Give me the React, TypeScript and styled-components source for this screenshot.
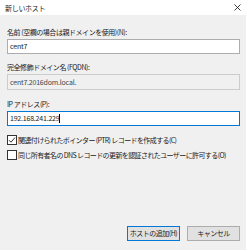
import React from "react";
import styled, { createGlobalStyle } from "styled-components";

const Global = createGlobalStyle`
  html, body { margin: 0; padding: 0; background: #f0f0f0; }
  body { font-family: "Noto Sans CJK JP", "Noto Sans", sans-serif; color: #1a1a1a; }
  * { box-sizing: border-box; }
`;

const Dialog = styled.div`
  width: 246px;
  height: 250px;
  display: flex;
  flex-direction: column;
  background: #f0f0f0;
`;

const TitleBar = styled.div`
  height: 15px;
  background: #ffffff;
  display: flex;
  align-items: center;
  justify-content: space-between;
  padding: 0 5px 0 5px;
  font-size: 7px;
  line-height: 9px;
`;

const Title = styled.span`
  letter-spacing: -0.3px;
  margin-top: 1px;
`;

const Content = styled.div`
  flex: 1;
  display: flex;
  flex-direction: column;
  padding: 13px 6px 9px 7px;
`;

const Label = styled.div<{ $gap?: number }>`
  font-size: 7px;
  line-height: 9px;
  height: 9px;
  white-space: pre;
  letter-spacing: -0.45px;
  margin-top: ${(p) => p.$gap ?? 0}px;
  margin-bottom: 2px;
`;

const Field = styled.div<{ $variant: "normal" | "disabled" | "focused"; $h: number }>`
  height: ${(p) => p.$h}px;
  border: 1px solid
    ${(p) =>
      p.$variant === "focused" ? "#0078d7" : p.$variant === "disabled" ? "#cccccc" : "#adadad"};
  background: ${(p) => (p.$variant === "disabled" ? "#f0f0f0" : "#ffffff")};
  font-size: 7px;
  line-height: 9px;
  padding: 0 2px;
  display: flex;
  align-items: center;
  color: ${(p) => (p.$variant === "disabled" ? "#444" : "#1a1a1a")};
  letter-spacing: -0.2px;
`;

const Caret = styled.span`
  display: inline-block;
  width: 1px;
  height: 9px;
  background: #000;
`;

const CheckRow = styled.div<{ $gap: number }>`
  display: flex;
  align-items: center;
  margin-top: ${(p) => p.$gap}px;
  height: 10px;
  font-size: 7px;
  line-height: 9px;
  white-space: pre;
  letter-spacing: -0.6px;
`;

const Box = styled.span`
  width: 10px;
  height: 10px;
  border: 1px solid #333;
  background: #fff;
  display: flex;
  align-items: center;
  justify-content: center;
  margin-right: 1px;
  flex: none;
`;

const ButtonRow = styled.div`
  margin-top: auto;
  display: flex;
  justify-content: flex-end;
  gap: 7px;
`;

const Button = styled.div<{ $primary?: boolean }>`
  width: 53px;
  height: 15px;
  background: #e1e1e1;
  border: 1px solid ${(p) => (p.$primary ? "#0078d7" : "#adadad")};
  font-size: 7px;
  line-height: 9px;
  display: flex;
  align-items: center;
  justify-content: center;
  white-space: nowrap;
  letter-spacing: -0.5px;
`;

const Check: React.FC<{ checked?: boolean }> = ({ checked }) => (
  <Box>
    {checked && (
      <svg width="8" height="8" viewBox="0 0 8 8">
        <path d="M1 4.2 L3 6.2 L7 1.5" fill="none" stroke="#333" strokeWidth="1" />
      </svg>
    )}
  </Box>
);

export default function App() {
  return (
    <>
      <Global />
      <Dialog>
        <TitleBar>
          <Title>新しいホスト</Title>
          <svg width="7" height="7" viewBox="0 0 7 7">
            <path d="M0.5 0.5 L6.5 6.5 M6.5 0.5 L0.5 6.5" stroke="#111" strokeWidth="0.8" />
          </svg>
        </TitleBar>
        <Content>
          <Label>名前 (空欄の場合は親ドメインを使用)(N):</Label>
          <Field $variant="normal" $h={15}>cent7</Field>
          <Label $gap={9}>完全修飾ドメイン名 (FQDN):</Label>
          <Field $variant="disabled" $h={16}>cent7.2016dom.local.</Field>
          <Label $gap={10}>IP アドレス(P):</Label>
          <Field $variant="focused" $h={15}>
            192.168.241.229
            <Caret />
          </Field>
          <CheckRow $gap={9}>
            <Check checked />
            関連付けられたポインター (PTR) レコードを作成する(C)
          </CheckRow>
          <CheckRow $gap={5}>
            <Check />
            同じ所有者名の DNS レコードの更新を認証されたユーザーに許可する(O)
          </CheckRow>
          <ButtonRow>
            <Button $primary>ホストの追加(H)</Button>
            <Button>キャンセル</Button>
          </ButtonRow>
        </Content>
      </Dialog>
    </>
  );
}
